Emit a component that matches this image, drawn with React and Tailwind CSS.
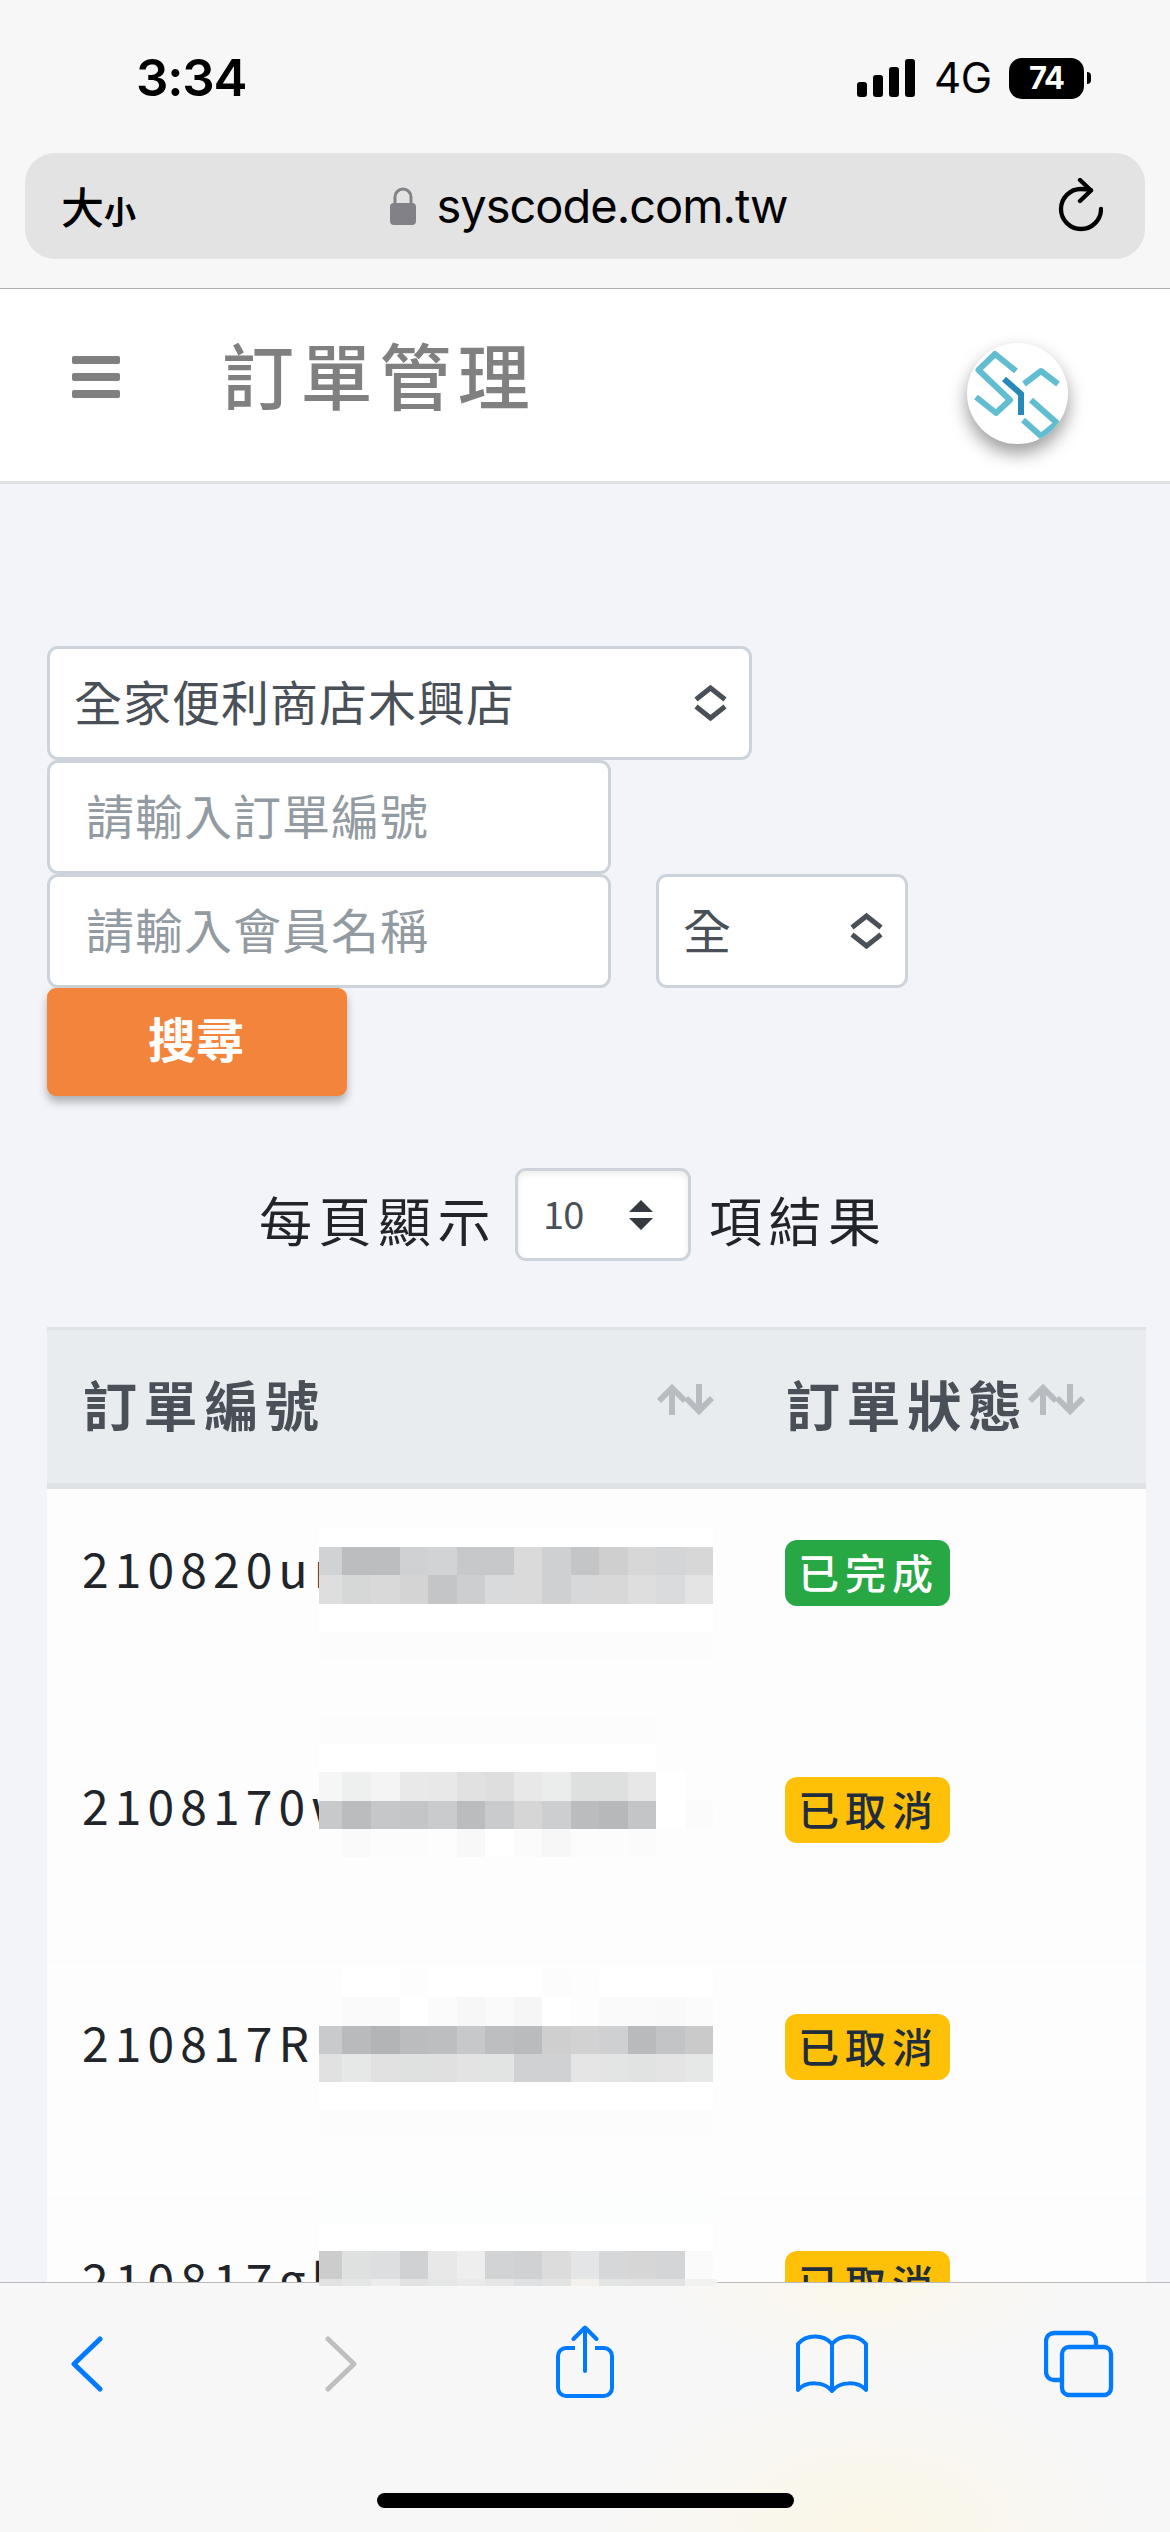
import { clsx } from 'clsx'

const sans = "font-['Noto_Sans_CJK_TC',sans-serif]"

const orders = [
  { id: '210820ur', status: '已完成', done: true },
  { id: '2108170w', status: '已取消' },
  { id: '210817R', status: '已取消' },
  { id: '210817gk', status: '已取消' },
]

// Redaction blocks over the order numbers: [height, colours left to right]
const maskColumns = '23px 29px 29px 28px 29px 28px 29px 28px 29px 28px 29px 28px 29px 28px 4px'
const fill = (color, n) => Array(n).fill(color)
const maskRows = [
  [19, fill('#ffffff', 14)],
  [28, ['#d1d2d4', '#bcbdbf', '#bcbdbf', '#d0d1d3', '#d2d3d5', '#c7c8ca', '#c7c8ca', '#dadada', '#cfd0d2', '#c4c5c7', '#cfcfcf', '#d6d7d6', '#d4d5d7', '#d7d7d7']],
  [29, ['#dedede', '#d6d8d7', '#d9d9d9', '#d3d4d3', '#c4c5c7', '#cdced0', '#d9dadc', '#dadada', '#cfd0d2', '#d7d8da', '#d8d8d8', '#dedede', '#dadbdd', '#e4e4e4']],
  [28, fill('#ffffff', 14)],
  [28, fill('#fcfcfc', 14)],
  [56, []],
  [28, fill('#fcfcfc', 12)],
  [28, fill('#ffffff', 12)],
  [29, ['#f6f6f6', '#eef0ef', '#f4f4f4', '#e9e9e9', '#e8e8e8', '#e1e1e1', '#dedede', '#e8e8e8', '#ebedec', '#dee0df', '#dee0df', '#e7e7e7', '#ffffff', '#fdfdfd']],
  [28, ['#c8c9cb', '#bbbcbe', '#c6c7c9', '#c4c5c7', '#cacbcd', '#bbbcbe', '#cacbcd', '#d6d6d6', '#cdced0', '#bbbcbe', '#b7b8ba', '#c4c5c7', '#ffffff', '#fbfbfb']],
  [28, ['#fdfdfd', '#fafafa', '#fcfcfc', '#fcfcfc', '#fdfdfd', '#f8f8f8', '#ffffff', '#fbfbfb', '#f7f7f7', '#fcfcfc', '#fcfcfc', '#fbfbfb']],
  [112, []],
  [28, ['#fdfdfd', '#ffffff', '#ffffff', '#fdfdfd', '#ffffff', '#ffffff', '#ffffff', '#ffffff', '#fcfcfc', '#fdfdfd', '#ffffff', '#ffffff', '#ffffff', '#ffffff']],
  [29, ['#fdfdfd', '#fafafa', '#fafafa', '#ffffff', '#fbfbfb', '#f7f7f7', '#fafafa', '#f6f6f6', '#ffffff', '#fdfdfd', '#fafafa', '#fafafa', '#f9f9f9', '#fbfbfb']],
  [28, ['#c9cacc', '#b9babc', '#b3b4b6', '#bbbcbe', '#bdbec0', '#c7c8ca', '#bdbec0', '#babbbd', '#cfcfcf', '#d2d2d2', '#cfd0d2', '#b9babc', '#c3c4c6', '#cacaca']],
  [28, ['#e1e1e1', '#e6e8e7', '#e1e1e1', '#dfe1e0', '#e0e0e0', '#e3e3e3', '#e2e4e3', '#d0d1d3', '#d0d1d3', '#e5e5e5', '#e3e5e4', '#e1e3e2', '#e4e4e4', '#e6e8e7']],
  [28, fill('#ffffff', 14)],
  [28, fill('#fcfcfc', 14)],
  [57, []],
  [28, fill('#fcfdfd', 14)],
  [28, fill('#ffffff', 14)],
  [28, ['#cccccc', '#dfe1e0', '#dddee0', '#d0d1d3', '#e8e8e8', '#eeeeee', '#d2d3d5', '#d0d1d3', '#dcdcdc', '#e4e5e7', '#d6d7d9', '#d6d6d6', '#d4d5d7', '#fafafa', '#fdfdfd']],
  [7, ['#e0e1e0', '#e5e7e6', '#ececec', '#e2e2e2', '#e5e7e6', '#eaeaea', '#e6e6e6', '#dfe0e2', '#e3e3e3', '#f4f1ec', '#e3e5e4', '#e3e3e3', '#e3e3e3', '#f1f1f0', '#f3f3f3']],
]

function StatusBar() {
  return (
    <div className="flex h-[153px] items-start justify-between pl-[136px] pr-[79px] pt-[48px] font-['Inter',sans-serif] text-black">
      <span className="text-[51px] font-semibold leading-[60px] tracking-[-1.2px]">3:34</span>
      <div className="flex h-[60px] items-center">
        <svg width="58" height="38" viewBox="0 0 58 38">
          <rect x="0" y="23" width="10" height="15" rx="3" />
          <rect x="16" y="16" width="10" height="22" rx="3" />
          <rect x="32" y="8" width="10" height="30" rx="3" />
          <rect x="48" y="0" width="10" height="38" rx="3" />
        </svg>
        <span className="ml-[19px] w-[58px] text-[42px] leading-[60px] tracking-[-0.5px]">4G</span>
        <div className="ml-[17px] flex h-[41px] w-[75px] items-center justify-center rounded-[13px] bg-black text-[31px] font-bold tracking-[-1px] text-white">74</div>
        <div className="ml-[3px] h-[12px] w-[4px] rounded-r-full bg-black" />
      </div>
    </div>
  )
}

function AddressBar() {
  return (
    <div className="mx-[25px] flex h-[106px] items-center justify-between rounded-[30px] bg-[#e3e3e3] pl-[36px] pr-[42px] text-black">
      <div className={clsx(sans, 'flex w-[120px] items-baseline pb-[2px] font-medium leading-none')}>
        <span className="text-[43px]">大</span>
        <span className="text-[32px] font-bold">小</span>
      </div>
      <div className="ml-[14px] flex items-center">
        <svg width="26" height="38" viewBox="0 0 26 38" fill="none">
          <path d="M5 18V10a8 8 0 0 1 16 0v8" stroke="#828187" strokeWidth="3" />
          <rect x="0" y="16" width="26" height="22" rx="4" fill="#828187" />
        </svg>
        <span className="ml-[20px] font-['Inter',sans-serif] text-[47px] leading-[60px] tracking-[-1px]">syscode.com.tw</span>
      </div>
      <div className="flex w-[120px] justify-end">
        <svg width="46" height="56" viewBox="0 0 46 56" fill="none" stroke="#000" strokeWidth="4.300" strokeLinecap="round" strokeLinejoin="round">
          <path d="M44 31A20 20 0 1 1 24 11c4 0 7 .3 10 1" />
          <path d="M23 2l11 10.500L23 23" />
        </svg>
      </div>
    </div>
  )
}

function Logo() {
  return (
    <div className="h-[101px] w-[101px] overflow-hidden rounded-full bg-white shadow-[0_9px_18px_rgba(0,0,0,0.4)]">
      <svg width="101" height="101" viewBox="0 0 101 101" fill="none" stroke="#62bdd1" strokeWidth="6">
        <path d="M49 28L28 11 11.500 27 43 57 29 70 9 54" strokeLinejoin="round" />
        <path d="M57 41L74 28 91 41" strokeLinejoin="round" />
        <path d="M64 57L90 80 74 93 56 77" strokeLinejoin="round" />
        <path d="M37 36L54 51V72" stroke="#2689b8" />
      </svg>
    </div>
  )
}

function PageHeader() {
  return (
    <header className="flex h-[195px] items-start justify-between border-b-[3px] border-[#dfe1e4] bg-white pl-[72px] pr-[102px] pt-[54px]">
      <div className="flex">
        <div className="mt-[13px] flex w-[48px] flex-col gap-[9px]">
          <div className="h-[8px] rounded-[2px] bg-[#808080]" />
          <div className="h-[8px] rounded-[2px] bg-[#808080]" />
          <div className="h-[8px] rounded-[2px] bg-[#808080]" />
        </div>
        <h1 className="ml-[102px] -mt-[15px] text-[72px] font-medium leading-[90px] tracking-[6.600px] text-[#808080]">訂單管理</h1>
      </div>
      <Logo />
    </header>
  )
}

function Chevrons() {
  return (
    <svg width="33" height="38" viewBox="0 0 33 38" fill="none" stroke="#495057" strokeWidth="5">
      <path d="M2 15.500L16.500 4 31 15.500M2 22.500L16.500 34 31 22.500" />
    </svg>
  )
}

const field = 'flex h-[114px] items-center rounded-[11px] border-[3px] border-[#cdd3da] bg-white text-[48px] tracking-[1px]'

function Filters() {
  return (
    <div className="flex flex-col items-start">
      <div className={clsx(field, 'w-[705px] justify-between pl-[24px] pr-[22px] text-[#495057]')}>
        <span className="pb-[7px]">全家便利商店木興店</span>
        <Chevrons />
      </div>
      <div className={clsx(field, 'w-[564px] pb-[7px] pl-[36px] text-[#939ba2]')}>請輸入訂單編號</div>
      <div className="flex gap-[45px]">
        <div className={clsx(field, 'w-[564px] pb-[7px] pl-[36px] text-[#939ba2]')}>請輸入會員名稱</div>
        <div className={clsx(field, 'w-[252px] justify-between pl-[24px] pr-[22px] text-[#495057]')}>
          <span className="pb-[7px]">全</span>
          <Chevrons />
        </div>
      </div>
      <button className="h-[108px] w-[300px] rounded-[9px] bg-[#f2843b] pb-[11px] pr-[2px] text-[48px] font-bold leading-none text-white shadow-[0_6px_8px_rgba(0,0,0,0.28)]">搜尋</button>
    </div>
  )
}

function PageSize() {
  return (
    <div className="mt-[72px] flex h-[93px] pl-[212px] text-[53px] tracking-[6.500px] text-[#212529]">
      <span className="w-[256px] pt-[11px] leading-[80px]">每頁顯示</span>
      <div className="flex h-[93px] w-[176px] items-center justify-between rounded-[11px] border-[3px] border-[#cdd3da] bg-white pl-[25px] pr-[35px] text-[38px] tracking-[-0.8px] text-[#495057] shadow-[inset_0_3px_6px_rgba(0,0,0,0.08)]">
        <span className="pb-[5px]">10</span>
        <svg width="24" height="30" viewBox="0 0 24 30" fill="#343a40">
          <path d="M0 12L12 0l12 12zM0 18h24L12 30z" />
        </svg>
      </div>
      <span className="ml-[18px] pt-[11px] leading-[80px]">項結果</span>
    </div>
  )
}

function SortIcon() {
  return (
    <svg width="57" height="31" viewBox="0 0 57 31" fill="none" stroke="#b8bcc0" strokeWidth="6">
      <path d="M15 31V5M2 17L15 4l13 13M42 0v26M29 14l13 13 13-13" />
    </svg>
  )
}

function OrderTable() {
  return (
    <div className="mt-[66px] bg-[#fdfdfd] text-[#212529]">
      <div className="flex h-[162px] border-b-[6px] border-t-[3px] border-[#dee2e6] bg-[#e9ecef] text-[54px] font-bold tracking-[6.600px] text-[#495057]">
        <div className="flex w-[703px] justify-between pl-[36px] pr-[36px] pt-[34px] leading-[80px]">
          訂單編號
          <div className="mt-[20px]"><SortIcon /></div>
        </div>
        <div className="flex pl-[36px] pt-[34px] leading-[80px]">
          <span className="w-[242px] whitespace-nowrap">訂單狀態</span>
          <div className="mt-[20px]"><SortIcon /></div>
        </div>
      </div>
      {orders.map((order) => (
        <div key={order.id} className="flex h-[237px] border-b-[3px] border-[#fbfcfc]">
          <div className="w-[703px] pl-[35px] pt-[42px] text-[48px] leading-[72px] tracking-[6.100px]">{order.id}</div>
          <div className="pl-[35px] pt-[51px]">
            <div className={clsx(
              'flex h-[66px] w-[165px] items-center rounded-[12px] pb-[4px] pl-[13px] text-[41px] font-medium leading-none tracking-[6px]',
              order.done ? 'bg-[#28a745] text-white' : 'bg-[#ffc107] text-[#1f2d3d]'
            )}>
              {order.status}
            </div>
          </div>
        </div>
      ))}
    </div>
  )
}

function Mask() {
  return (
    <div className="absolute left-[319px] top-[1528px] z-10 w-[398px]">
      {maskRows.map(([height, colors], i) => (
        <div key={i} className="grid" style={{ height, gridTemplateColumns: maskColumns }}>
          {colors.map((color, j) => (
            <div key={j} style={{ backgroundColor: color }} />
          ))}
        </div>
      ))}
    </div>
  )
}

function Toolbar() {
  return (
    <footer className="h-[250px] border-t border-[#b9b9b9] bg-[#f7f7f7] bg-[radial-gradient(ellipse_260px_150px_at_74%_100%,#fbf6e6,transparent),radial-gradient(ellipse_200px_90px_at_74%_0%,#fbf7ea,transparent)]">
      <div className="flex h-[160px] items-center pl-[70px] pt-[2px]">
        <svg width="33" height="56" viewBox="0 0 33 56" fill="none" stroke="#007aff" strokeWidth="5" strokeLinecap="round" strokeLinejoin="round">
          <path d="M30 3L4 28l26 25" />
        </svg>
        <svg className="ml-[222px]" width="33" height="56" viewBox="0 0 33 56" fill="none" stroke="#bfbfbf" strokeWidth="5" strokeLinecap="round" strokeLinejoin="round">
          <path d="M3 3l26 25L3 53" />
        </svg>
        <svg className="ml-[198px] mb-[4px]" width="58" height="74" viewBox="0 0 58 74" fill="none" stroke="#007aff" strokeWidth="4" strokeLinecap="round" strokeLinejoin="round">
          <path d="M19 23H10a8 8 0 0 0-8 8v32a8 8 0 0 0 8 8h38a8 8 0 0 0 8-8V31a8 8 0 0 0-8-8h-9" strokeLinecap="butt" />
          <path d="M29 46V3M17.500 14L29 2.500 40.500 14" />
        </svg>
        <svg className="ml-[182px]" width="72" height="60" viewBox="0 0 72 60" fill="none" stroke="#007aff" strokeWidth="4" strokeLinecap="round" strokeLinejoin="round">
          <path d="M36 10C28 0 10 0 2 10v46c8-9 26-9 34 1 8-10 26-10 34-1V10C62 0 44 0 36 10zM36 10v46" />
        </svg>
        <svg className="ml-[176px]" width="70" height="68" viewBox="0 0 70 68" fill="none" stroke="#007aff" strokeWidth="4.300">
          <path d="M17 50h-7a8 8 0 0 1-8-8V11a8 8 0 0 1 8-8h34a8 8 0 0 1 8 8v6" />
          <rect x="18" y="17" width="49" height="48" rx="7" />
        </svg>
      </div>
      <div className="mx-auto mt-[50px] h-[15px] w-[417px] rounded-full bg-black" />
    </footer>
  )
}

export default function App() {
  return (
    <div className={clsx(sans, 'relative flex h-[2532px] w-[1170px] flex-col overflow-hidden bg-[#f3f4f9]')}>
      <div className="h-[289px] border-b border-[#b0b0b0] bg-[#f7f7f7]">
        <StatusBar />
        <AddressBar />
      </div>
      <PageHeader />
      <main className="h-[1798px] overflow-hidden pl-[47px] pr-[24px] pt-[162px]">
        <Filters />
        <PageSize />
        <OrderTable />
      </main>
      <Toolbar />
      <Mask />
    </div>
  )
}
